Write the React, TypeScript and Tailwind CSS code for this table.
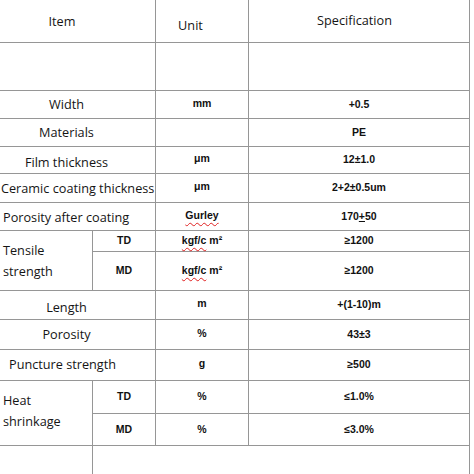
import React from 'react';

const line = "border-[#969696]";
const itemFont = "font-['Open_Sans',sans-serif] text-[12.7px] text-[#151515]";
const valFont = "font-['Liberation_Sans',Arial,sans-serif] font-bold text-[10.5px] text-[#111]";

type Row = { h: string; item: React.ReactNode; itemCls?: string; unit?: React.ReactNode; spec?: React.ReactNode };

const squiggle = "underline decoration-wavy decoration-[#e02020] decoration-1 underline-offset-[3px]";

const rowsTop: Row[] = [
  { h: "h-[28px]", item: "Width", unit: "mm", spec: "+0.5" },
  { h: "h-[28px]", item: "Materials", spec: "PE" },
  { h: "h-[27px]", item: "Film thickness", itemCls: "pt-[5px]", unit: "μm", spec: "12±1.0" },
  { h: "h-[29px]", item: "Ceramic coating thickness", itemCls: "justify-start pl-[1px] pt-[2px] whitespace-nowrap", unit: "μm", spec: "2+2±0.5um" },
  { h: "h-[28px]", item: "Porosity after coating", itemCls: "justify-start pl-[3px] pt-[3px]", unit: <span className={squiggle}>Gurley</span>, spec: <>170<u>+</u>50</> },
];

const rowsMid: Row[] = [
  { h: "h-[29px]", item: "Length", itemCls: "pt-[5px]", unit: "m", spec: "+(1-10)m" },
  { h: "h-[30px]", item: "Porosity", unit: "%", spec: "43±3" },
  { h: "h-[31px]", item: "Puncture strength", itemCls: "justify-start pl-[9px]", unit: "g", spec: "≥500" },
];

const kgf = (
  <span>
    <span className={squiggle}>kgf/c</span> m²
  </span>
);

function FullRow({ r }: { r: Row }) {
  return (
    <div className={`flex ${r.h} border-b ${line}`}>
      <div className={`w-[156px] border-r ${line} flex items-center justify-center pr-[22px] ${itemFont} ${r.itemCls ?? ""}`}>
        {r.item}
      </div>
      <div className={`w-[93px] border-r ${line} flex items-center justify-center pb-[2px] ${valFont}`}>{r.unit}</div>
      <div className={`w-[221px] border-r ${line} flex items-center justify-center ${valFont}`}>{r.spec}</div>
    </div>
  );
}

function SplitRow({ label, h, subs, top }: { label: string[]; h: string; top: string; subs: { h: string; dir: string; unit: React.ReactNode; spec: string }[] }) {
  return (
    <div className={`flex ${h} border-b ${line}`}>
      <div className={`w-[93px] border-r ${line} flex flex-col pl-[3px] ${top} ${itemFont} leading-[21px]`}>
        {label.map((l) => (
          <span key={l}>{l}</span>
        ))}
      </div>
      <div className="flex flex-col">
        {subs.map((s, i) => (
          <div key={s.dir} className={`flex ${s.h} ${i === 0 ? `border-b ${line}` : ""}`}>
            <div className={`w-[63px] border-r ${line} flex items-center justify-center ${valFont}`}>{s.dir}</div>
            <div className={`w-[93px] border-r ${line} flex items-center justify-center ${valFont}`}>{s.unit}</div>
            <div className={`w-[221px] border-r ${line} flex items-center justify-center ${valFont}`}>{s.spec}</div>
          </div>
        ))}
      </div>
    </div>
  );
}

export default function App() {
  return (
    <div className="w-[474px] h-[474px] bg-white overflow-hidden">
      <div className="w-[470px] flex flex-col">
        {/* header */}
        <div className={`flex h-[43px] border-b ${line}`}>
          <div className={`w-[156px] border-r ${line} flex justify-center pr-[31px] pt-[13px] leading-[16px] ${itemFont}`}>Item</div>
          <div className={`w-[93px] border-r ${line} flex justify-center pr-[23px] pt-[17px] leading-[16px] ${itemFont}`}>Unit</div>
          <div className={`w-[221px] border-r ${line} flex justify-center pr-[9px] pt-[12px] leading-[16px] ${itemFont}`}>Specification</div>
        </div>
        <div className={`flex h-[48px] border-b ${line}`}>
          <div className={`w-[156px] border-r ${line}`} />
          <div className={`w-[93px] border-r ${line}`} />
          <div className={`w-[221px] border-r ${line}`} />
        </div>
        {rowsTop.map((r, i) => (
          <FullRow key={i} r={r} />
        ))}
        <SplitRow
          label={["Tensile", "strength"]}
          h="h-[60px]"
          top="pt-[9px]"
          subs={[
            { h: "h-[21px]", dir: "TD", unit: kgf, spec: "≥1200" },
            { h: "h-[38px]", dir: "MD", unit: kgf, spec: "≥1200" },
          ]}
        />
        {rowsMid.map((r, i) => (
          <FullRow key={i} r={r} />
        ))}
        <SplitRow
          label={["Heat", "shrinkage"]}
          h="h-[65px]"
          top="pt-[9px]"
          subs={[
            { h: "h-[33px]", dir: "TD", unit: "%", spec: "≤1.0%" },
            { h: "h-[31px]", dir: "MD", unit: "%", spec: "≤3.0%" },
          ]}
        />
        <div className="flex h-[29px]">
          <div className={`w-[93px] border-r ${line}`} />
          <div className={`w-[377px] border-r ${line}`} />
        </div>
      </div>
    </div>
  );
}
